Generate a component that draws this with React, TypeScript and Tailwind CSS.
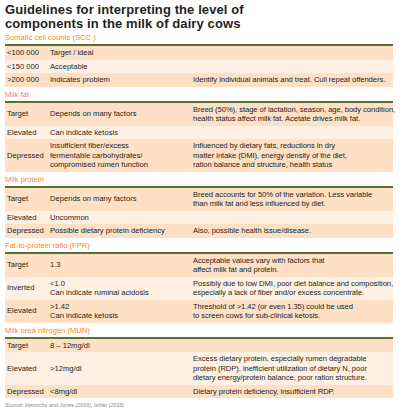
const sections = [
  {
    title: 'Somatic cell counts (SCC )',
    rows: [
      { label: '<100 000', value: 'Target / ideal', note: '' },
      { label: '<150 000', value: 'Acceptable', note: '' },
      { label: '>200 000', value: 'Indicates problem', note: 'Identify individual animals and treat. Cull repeat offenders.' },
    ],
  },
  {
    title: 'Milk fat',
    rows: [
      { label: 'Target', value: 'Depends on many factors', note: 'Breed (50%), stage of lactation, season, age, body condition,\nhealth status affect milk fat. Acetate drives milk fat.' },
      { label: 'Elevated', value: 'Can indicate ketosis', note: '' },
      { label: 'Depressed', value: 'Insufficient fiber/excess\nfermentable carbohydrates/\ncompromised rumen function', note: 'Influenced by dietary fats, reductions in dry\nmatter intake (DMI), energy density of the diet,\nration balance and structure, health status' },
    ],
  },
  {
    title: 'Milk protein',
    rows: [
      { label: 'Target', value: 'Depends on many factors', note: 'Breed accounts for 50% of the variation. Less variable\nthan milk fat and less influenced by diet.' },
      { label: 'Elevated', value: 'Uncommon', note: '' },
      { label: 'Depressed', value: 'Possible dietary protein deficiency', note: 'Also, possible health issue/disease.' },
    ],
  },
  {
    title: 'Fat-to-protein ratio (FPR)',
    rows: [
      { label: 'Target', value: '1.3', note: 'Acceptable values vary with factors that\naffect milk fat and protein.' },
      { label: 'Inverted', value: '<1.0\nCan indicate ruminal acidosis', note: 'Possibly due to low DMI, poor diet balance and composition,\nespecially a lack of fiber and/or excess concentrate.' },
      { label: 'Elevated', value: '>1.42\nCan indicate ketosis', note: 'Threshold of >1.42 (or even 1.35) could be used\nto screen cows for sub-clinical ketosis.' },
    ],
  },
  {
    title: 'Milk urea nitrogen (MUN)',
    rows: [
      { label: 'Target', value: '8 – 12mg/dl', note: '' },
      { label: 'Elevated', value: '>12mg/dl', note: 'Excess dietary protein, especially rumen degradable\nprotein (RDP), inefficient utilization of dietary N, poor\ndietary energy/protein balance, poor ration structure.' },
      { label: 'Depressed', value: '<8mg/dl', note: 'Dietary protein deficiency, insufficient RDP.' },
    ],
  },
];

export default function App() {
  return (
    <div className="w-[400px] h-[410px] overflow-hidden bg-white px-[5px] pt-[3px] font-['Liberation_Sans',Arial,sans-serif] text-[#231f20]">
      <h1 className="text-[13px] font-bold leading-[13.5px] tracking-[0.1px]">
        Guidelines for interpreting the level of
        <br />
        components in the milk of dairy cows
      </h1>

      <div className="w-[388px]">
        {sections.map((s) => (
          <div key={s.title}>
            <div className="mt-[3px] text-[7.6px] leading-[10px] text-[#f08a1f]">{s.title}</div>
            <div className="mt-[1px] h-[2px] bg-[#56722e]" />
            {s.rows.map((r, i) => (
              <div
                key={r.label + i}
                className={`grid grid-cols-[43px_143px_1fr] items-center py-[2px] text-[7.6px] leading-[9.5px] ${i % 2 === 0 ? 'bg-[#fde0c5]' : 'bg-[#fef0e3]'}`}
              >
                <div className="pl-[2px] whitespace-nowrap">{r.label}</div>
                <div className="pl-[2px] whitespace-pre-line">{r.value}</div>
                <div className="pl-[2px] whitespace-pre tracking-[-0.05px]">{r.note}</div>
              </div>
            ))}
          </div>
        ))}
      </div>

      <p className="mt-[3px] text-[5.4px] italic leading-[8px] text-[#8a8a8a]">
        Source: Heinrichs and Jones (2016), Ishler (2016)
      </p>
    </div>
  );
}
